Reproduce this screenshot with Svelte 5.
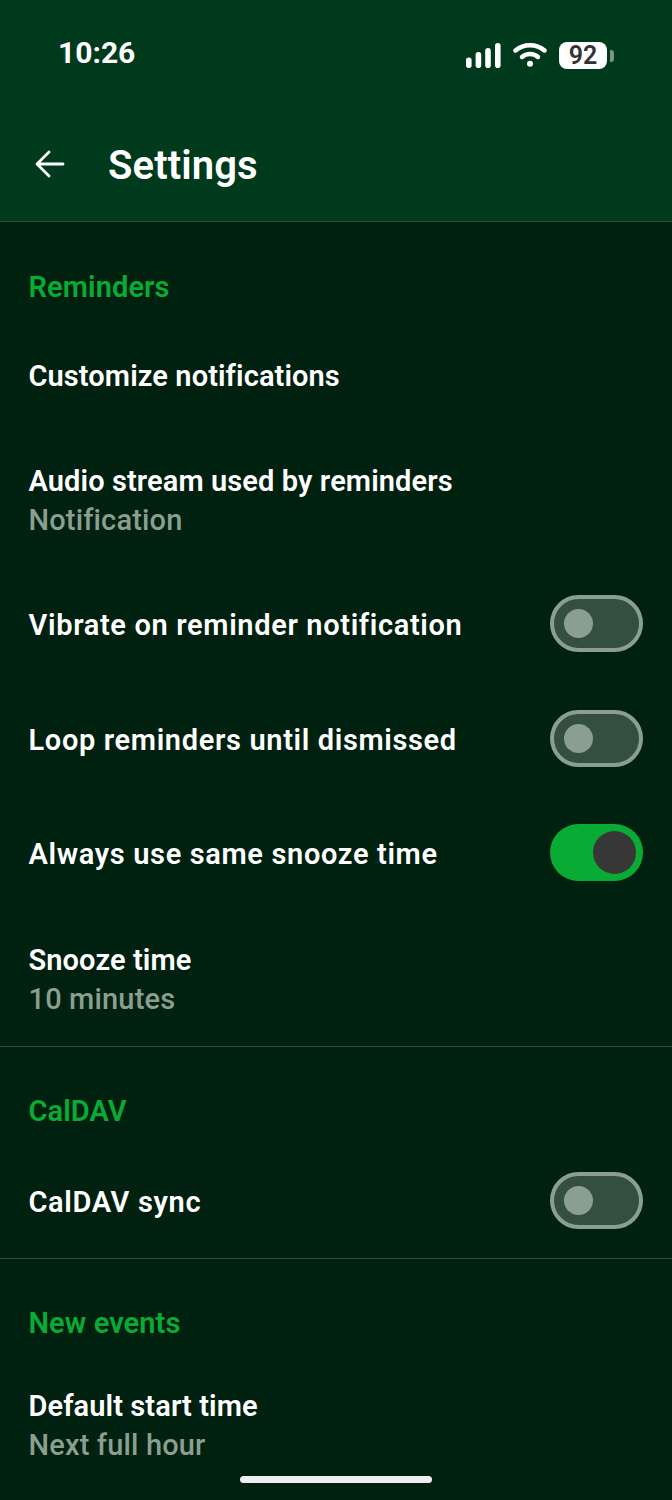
<script>
  const reminders = [
    { title: 'Customize notifications', first: true },
    { title: 'Audio stream used by reminders', sub: 'Notification' },
    { title: 'Vibrate on reminder notification', toggle: false },
    { title: 'Loop reminders until dismissed', toggle: false },
    { title: 'Always use same snooze time', toggle: true },
    { title: 'Snooze time', sub: '10 minutes' }
  ]

  const sections = [
    { name: 'Reminders', rows: reminders },
    { name: 'CalDAV', rows: [{ title: 'CalDAV sync', toggle: false }] },
    { name: 'New events', rows: [{ title: 'Default start time', sub: 'Next full hour' }] }
  ]
</script>

<div class="screen">
  <header class="header">
    <div class="status">
      <span class="time">10:26</span>
      <div class="status-icons">
        <svg class="signal" width="35" height="25" viewBox="0 0 35 25" fill="#fff">
          <rect x="0" y="14.5" width="5.6" height="10.5" rx="2.8" />
          <rect x="9.6" y="9" width="5.6" height="16" rx="2.8" />
          <rect x="19.2" y="5" width="5.6" height="20" rx="2.8" />
          <rect x="29" y="0" width="5.6" height="25" rx="2.8" />
        </svg>
        <svg class="wifi" width="34" height="24" viewBox="0 0 34 24" fill="none" stroke="#fff" stroke-width="4.4" stroke-linecap="round">
          <path d="M2.5 7.5C10.5 0.5 23.5 0.5 31.5 7.5" />
          <path d="M9 14C13.5 10 20.5 10 25 14" />
          <circle cx="17" cy="20.8" r="3" fill="#fff" stroke="none" />
        </svg>
        <div class="battery">
          <span class="level">92</span>
          <span class="cap"></span>
        </div>
      </div>
    </div>
    <div class="toolbar">
      <svg class="back" width="30" height="28" viewBox="0 0 30 28" fill="none" stroke="#fff" stroke-width="2.8" stroke-linecap="round" stroke-linejoin="round">
        <path d="M28 14H2.5M14 2L2 14L14 26" />
      </svg>
      <h1>Settings</h1>
    </div>
  </header>

  {#each sections as section}
    <section class="section">
      <h2>{section.name}</h2>
      {#each section.rows as row}
        <div class="row" class:double={row.sub} class:first={row.first}>
          <div class="text">
            <div class="title" class:wide={row.toggle !== undefined}>{row.title}</div>
            {#if row.sub}
              <div class="sub">{row.sub}</div>
            {/if}
          </div>
          {#if row.toggle !== undefined}
            <div class="switch" class:on={row.toggle}><span class="thumb"></span></div>
          {/if}
        </div>
      {/each}
    </section>
  {/each}

  <div class="home-bar"></div>
</div>

<style>
  :global(body) {
    background: #002010;
  }

  .screen {
    position: relative;
    height: 1500px;
    overflow: hidden;
    background: #002010;
    color: #fff;
    font-family: Roboto, "Liberation Sans", sans-serif;
  }

  .header {
    height: 221px;
    background: #003a1c;
    border-bottom: 1px solid #39473d;
  }

  .status {
    height: 107px;
    box-sizing: border-box;
    padding: 34px 65px 0 58px;
    display: flex;
    justify-content: space-between;
    align-items: flex-start;
  }

  .time {
    font-size: 30px;
    font-weight: 700;
    line-height: 38px;
  }

  .status-icons {
    display: flex;
    align-items: center;
    gap: 12px;
    height: 38px;
    margin-top: 2px;
  }

  .battery {
    position: relative;
    width: 48px;
    height: 27px;
    border-radius: 8px;
    background: #fff;
    display: flex;
    align-items: center;
    justify-content: center;
  }

  .level {
    font-size: 25px;
    font-weight: 600;
    color: #333;
    line-height: 27px;
  }

  .cap {
    position: absolute;
    right: -7px;
    top: 8px;
    width: 4px;
    height: 12px;
    border-radius: 0 3px 3px 0;
    background: #7d9485;
  }

  .toolbar {
    display: flex;
    align-items: center;
    height: 114px;
    padding-left: 35px;
  }

  .back {
    margin-right: 43px;
  }

  h1 {
    margin: 0;
    padding-top: 2px;
    font-size: 40px;
    font-weight: 600;
    letter-spacing: 0.1px;
  }

  .section {
    border-bottom: 1px solid #39473d;
    padding: 0 29px 0 28.5px;
  }

  .section:first-of-type {
    padding-bottom: 1px;
  }

  .section:last-of-type {
    border-bottom: none;
  }

  h2 {
    margin: 0;
    height: 96px;
    padding-top: 44px;
    box-sizing: border-box;
    font-size: 29px;
    line-height: 40px;
    font-weight: 600;
    letter-spacing: 0.1px;
    color: #0aab35;
  }

  .section:first-of-type h2 {
    height: 98px;
    padding-top: 45px;
  }

  .section:last-of-type h2 {
    height: 97.5px;
  }

  .row {
    height: 114.5px;
    display: flex;
    align-items: center;
    justify-content: space-between;
  }

  .row.first {
    height: 111.5px;
  }

  .row.double {
    height: 135px;
  }

  .text {
    padding-top: 4px;
  }

  .first .text {
    padding-top: 2px;
  }

  .title {
    font-size: 29px;
    font-weight: 600;
    line-height: 39px;
    letter-spacing: 0.1px;
  }

  .title.wide {
    letter-spacing: 0.65px;
  }

  .sub {
    font-size: 29px;
    font-weight: 500;
    line-height: 39px;
    letter-spacing: 0.15px;
    color: #8a9f90;
  }

  .switch {
    width: 93px;
    height: 57px;
    box-sizing: border-box;
    border: 4px solid #8a9f90;
    border-radius: 29px;
    background: #344f3e;
    display: flex;
    align-items: center;
    padding-left: 10px;
  }

  .switch .thumb {
    width: 29px;
    height: 29px;
    border-radius: 50%;
    background: #8a9f90;
  }

  .switch.on {
    border: none;
    background: #0aab35;
    justify-content: flex-end;
    padding: 0 7px 0 0;
  }

  .switch.on .thumb {
    width: 43px;
    height: 43px;
    background: #373737;
  }

  .home-bar {
    position: absolute;
    left: 240px;
    bottom: 17px;
    width: 192px;
    height: 7px;
    border-radius: 4px;
    background: #eee;
  }
</style>
